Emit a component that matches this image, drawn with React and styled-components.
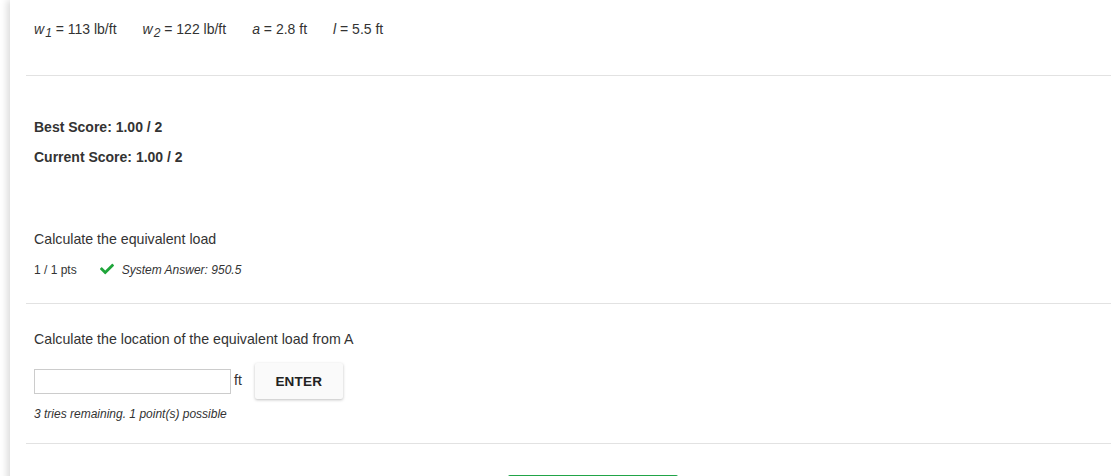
import React from "react";
import styled, { createGlobalStyle } from "styled-components";
import { FaCheck } from "react-icons/fa";

const Global = createGlobalStyle`
  html, body {
    margin: 0;
    padding: 0;
    background: #fff;
    overflow: hidden;
  }
  body {
    font-family: "Liberation Sans", Arial, sans-serif;
    color: #333;
  }
`;

const Page = styled.div`
  width: 1111px;
  height: 476px;
  overflow: hidden;
  padding-left: 10px;
  box-sizing: border-box;
`;

const Panel = styled.div`
  min-height: 600px;
  background: #fff;
  box-shadow: -3px 0 7px rgba(0, 0, 0, 0.14);
  padding-left: 16px;
`;

const Section = styled.div`
  padding: ${(p) => p.pad || "0 0 0 8px"};
  border-bottom: ${(p) => (p.rule ? "1px solid #e2e2e2" : "none")};
  margin-right: -20px;
`;

const Params = styled.div`
  display: flex;
  align-items: baseline;
  font-size: 14px;
  line-height: 18px;
`;

const Param = styled.span`
  margin-right: 26px;
  white-space: nowrap;
`;

const Var = styled.i`
  font-style: italic;
`;

const Sub = styled.sub`
  font-size: 12px;
  font-style: italic;
  vertical-align: -3px;
  line-height: 0;
  margin-left: 1px;
`;

const Score = styled.div`
  font-size: 14px;
  font-weight: bold;
  line-height: 18px;
  margin-bottom: ${(p) => p.mb || "0"};
`;

const Question = styled.div`
  font-size: 14.2px;
  line-height: 18px;
`;

const Result = styled.div`
  display: flex;
  align-items: center;
  font-size: 12px;
  line-height: 16px;
  margin-top: 14px;
`;

const Pts = styled.span`
  margin-right: 23px;
`;

const Check = styled(FaCheck)`
  color: #1fa53a;
  font-size: 14px;
  margin-right: 8px;
  margin-top: -3px;
`;

const Answer = styled.i`
  font-style: italic;
  font-size: 12px;
`;

const InputRow = styled.div`
  display: flex;
  align-items: center;
  margin-top: 15px;
`;

const Input = styled.input`
  width: 197px;
  height: 25px;
  box-sizing: border-box;
  border: 1px solid #ccc;
  outline: none;
  margin: 0;
  padding: 0 4px;
`;

const Unit = styled.span`
  font-size: 14px;
  margin-left: 3px;
  margin-right: 13px;
  margin-top: -3px;
`;

const EnterButton = styled.button`
  width: 88px;
  height: 36px;
  border: none;
  border-radius: 2px;
  background: #fafafa;
  box-shadow: 0 1px 3px rgba(0, 0, 0, 0.25);
  font-family: "Liberation Sans", Arial, sans-serif;
  font-size: 13.5px;
  font-weight: 600;
  letter-spacing: 0.2px;
  color: #222;
  cursor: pointer;
`;

const Tries = styled.div`
  font-size: 12px;
  font-style: italic;
  line-height: 16px;
  margin-top: 7px;
`;

const Footer = styled.div`
  padding: 31px 0 0 482px;
`;

const SubmitButton = styled.button`
  width: 170px;
  height: 36px;
  border: none;
  border-radius: 2px;
  background: #21a448;
  color: #fff;
`;

export default function App() {
  return (
    <>
      <Global />
      <Page>
        <Panel>
          <Section rule pad="20px 0 37px 8px">
            <Params>
              <Param>
                <Var>w</Var>
                <Sub>1</Sub> = 113 lb/ft
              </Param>
              <Param>
                <Var>w</Var>
                <Sub>2</Sub> = 122 lb/ft
              </Param>
              <Param>
                <Var>a</Var> = 2.8 ft
              </Param>
              <Param>
                <Var>l</Var> = 5.5 ft
              </Param>
            </Params>
          </Section>

          <Section pad="42px 0 0 8px">
            <Score mb="12px">Best Score: 1.00 / 2</Score>
            <Score>Current Score: 1.00 / 2</Score>
          </Section>

          <Section rule pad="64px 0 25px 8px">
            <Question>Calculate the equivalent load</Question>
            <Result>
              <Pts>1 / 1 pts</Pts>
              <Check />
              <Answer>System Answer: 950.5</Answer>
            </Result>
          </Section>

          <Section rule pad="26px 0 21px 8px">
            <Question>Calculate the location of the equivalent load from A</Question>
            <InputRow>
              <Input type="text" />
              <Unit>ft</Unit>
              <EnterButton>ENTER</EnterButton>
            </InputRow>
            <Tries>3 tries remaining. 1 point(s) possible</Tries>
          </Section>

          <Footer>
            <SubmitButton />
          </Footer>
        </Panel>
      </Page>
    </>
  );
}
